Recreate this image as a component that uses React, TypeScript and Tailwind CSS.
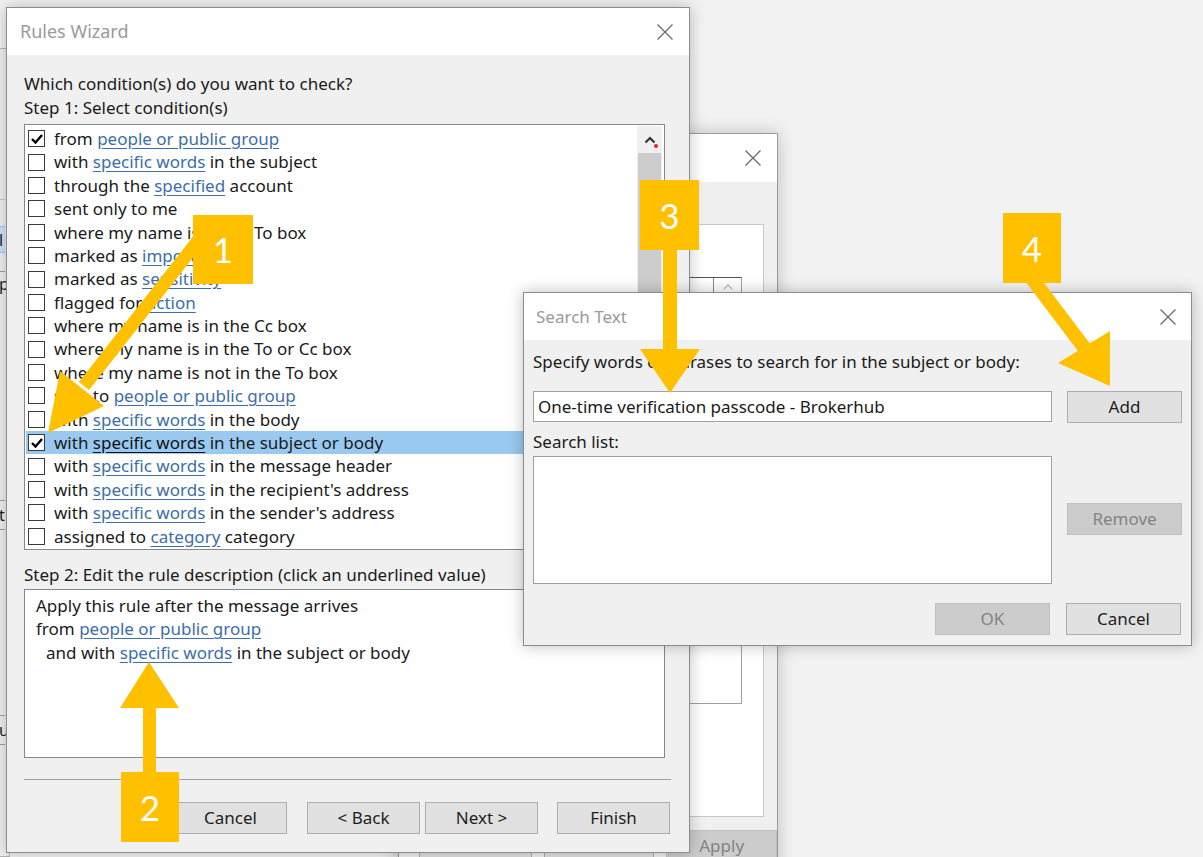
import React from 'react';

const font = "font-['Noto_Sans',sans-serif]";
const link = 'text-[#3c6ea8] underline underline-offset-[3px]';

type Cond = [string, string, string, boolean?];

const conditions: Cond[] = [
  ['from ', 'people or public group', '', true],
  ['with ', 'specific words', ' in the subject'],
  ['through the ', 'specified', ' account'],
  ['sent only to me', '', ''],
  ['where my name is in the To box', '', ''],
  ['marked as ', 'importance', ''],
  ['marked as ', 'sensitivity', ''],
  ['flagged for ', 'action', ''],
  ['where my name is in the Cc box', '', ''],
  ['where my name is in the To or Cc box', '', ''],
  ['where my name is not in the To box', '', ''],
  ['sent to ', 'people or public group', ''],
  ['with ', 'specific words', ' in the body'],
  ['with ', 'specific words', ' in the subject or body', true],
  ['with ', 'specific words', ' in the message header'],
  ['with ', 'specific words', " in the recipient's address"],
  ['with ', 'specific words', " in the sender's address"],
  ['assigned to ', 'category', ' category'],
];

const SELECTED = 13;

function CloseX() {
  return (
    <svg width="18" height="18" viewBox="0 0 18 18">
      <path d="M1.5 1.5 L16.5 16.5 M16.5 1.5 L1.5 16.5" stroke="#6b6b6b" strokeWidth="1.3" />
    </svg>
  );
}

function Check({ on }: { on?: boolean }) {
  return (
    <span className="w-[17px] h-[17px] border border-[#3a3a3a] bg-white flex items-center justify-center shrink-0">
      {on && (
        <svg width="14" height="14" viewBox="0 0 14 14">
          <path d="M2 7 L5.5 10.5 L12 3" stroke="#000" strokeWidth="2.4" fill="none" />
        </svg>
      )}
    </span>
  );
}

function Btn({ label, disabled, w = 'w-[113px]' }: { label: string; disabled?: boolean; w?: string }) {
  return (
    <div
      className={
        disabled
          ? `${w} h-[32px] flex items-center justify-center border border-[#bfbfbf] bg-[#cccccc] text-[#838383]`
          : `${w} h-[32px] flex items-center justify-center border border-[#adadad] bg-[#e1e1e1] text-[#1e1e1e]`
      }
    >
      {label}
    </div>
  );
}

function LeftBackWindow() {
  return (
    <div className="absolute left-[-300px] top-[48px] w-[310px] h-[809px] bg-[#f0f0f0] border border-[#b5b5b5] flex flex-col items-end pr-[4px] text-[16px] text-[#1e1e1e]">
      <div className="h-[150px]" />
      <div className="w-[40px] border-t border-[#c8c8c8] h-[27px]" />
      <div className="w-[40px] h-[27px] bg-[#cce4f7] border-y border-[#9ac6ed] flex items-center pl-[34px] leading-none">l</div>
      <div className="w-[40px] h-[18px]" />
      <div className="w-[40px] border-t border-[#a0a0a0] h-[24px] flex items-center pl-[34px]">p</div>
      <div className="h-[205px]" />
      <div className="w-[40px] border-y border-[#a0a0a0] h-[30px] flex items-center pl-[34px]">t</div>
      <div className="h-[185px]" />
      <div className="w-[40px] border-y border-[#a0a0a0] h-[30px] flex items-center pl-[34px]">u</div>
    </div>
  );
}

function MiddleBackWindow() {
  return (
    <div className="absolute left-[398px] top-[133px] w-[380px] h-[740px] bg-[#f0f0f0] border border-[#9a9a9a] shadow-[0_0_16px_rgba(0,0,0,0.22)] flex flex-col">
      <div className="h-[48px] bg-white flex items-center justify-end pr-[15px] shrink-0">
        <CloseX />
      </div>
      <div className="flex flex-col pl-[20px] pt-[42px]">
        <div className="w-[345px] h-[593px] bg-white border border-[#c8c8c8] flex flex-col pt-[52px]">
          <div className="w-[322px] h-[427px] border border-[#a0a0a0] border-t-[#555] flex flex-col">
            <div className="flex justify-end h-[20px] border-b border-[#e0e0e0]">
              <div className="w-[28px] border-l border-[#888]" />
              <div className="w-[28px] border-l border-[#888] flex items-start justify-center pt-[6px]">
                <svg width="10" height="6" viewBox="0 0 10 6">
                  <path d="M1 5 L5 1 L9 5" stroke="#bbb" strokeWidth="1.3" fill="none" />
                </svg>
              </div>
            </div>
          </div>
        </div>
        <div className="flex gap-[12px] mt-[13px] text-[17px]">
          <Btn label="OK" w="w-[115px]" />
          <Btn label="Cancel" w="w-[113px]" />
          <Btn label="Apply" disabled w="w-[113px]" />
        </div>
      </div>
    </div>
  );
}

function RulesWizard() {
  return (
    <div className="absolute left-[6px] top-[7px] w-[684px] h-[846px] bg-[#f0f0f0] border border-[#8c8c8c] shadow-[0_0_14px_rgba(0,0,0,0.25)] flex flex-col">
      <div className="h-[47px] bg-white flex items-center justify-between pl-[13px] pr-[15px] shrink-0">
        <span className="text-[18px] text-[#9a9a9a]">Rules Wizard</span>
        <CloseX />
      </div>
      <div className="flex flex-col pl-[17px] pr-[24px] pt-[17px] text-[17px] text-[#1a1a1a]">
        <div className="leading-[24px]">Which condition(s) do you want to check?</div>
        <div className="leading-[24px]">Step 1: Select condition(s)</div>
        <div className="mt-[4px] h-[426px] bg-white border border-[#828790] flex overflow-hidden">
          <div className="flex-1 flex flex-col pt-[2px] pl-[1px]">
            {conditions.map((c, i) => {
              const sel = i === SELECTED;
              return (
                <div
                  key={i}
                  className={
                    sel
                      ? 'h-[23.4px] flex items-center gap-[9px] pl-[2px] bg-[#99c9ef] whitespace-pre'
                      : 'h-[23.4px] flex items-center gap-[9px] pl-[2px] whitespace-pre'
                  }
                >
                  <Check on={c[3]} />
                  <span>
                    {c[0]}
                    {c[1] && (
                      <span className={sel ? 'underline underline-offset-[3px] text-[#111]' : link}>{c[1]}</span>
                    )}
                    {c[2]}
                  </span>
                </div>
              );
            })}
          </div>
          <div className="w-[25px] mr-[2px] mt-[1px] flex flex-col bg-[#f0f0f0]">
            <div className="h-[27px] flex items-center justify-center relative">
              <svg width="12" height="8" viewBox="0 0 12 8">
                <path d="M1.5 6.5 L6 2 L10.5 6.5" stroke="#333" strokeWidth="2.2" fill="none" />
              </svg>
              <span className="absolute left-[17px] top-[18px] w-[4px] h-[4px] rounded-full bg-[#e0202a]" />
            </div>
            <div className="mx-[1px] h-[220px] bg-[#cdcdcd]" />
          </div>
        </div>
        <div className="mt-[13px] leading-[24px]">Step 2: Edit the rule description (click an underlined value)</div>
        <div className="mt-[2px] h-[169px] bg-white border border-[#828790] pl-[11px] pt-[4px] flex flex-col whitespace-pre">
          <div className="leading-[23.4px]">Apply this rule after the message arrives</div>
          <div className="leading-[23.4px]">
            from <span className={link}>people or public group</span>
          </div>
          <div className="leading-[23.4px] pl-[10px]">
            {'and with '}
            <span className={link}>specific words</span> in the subject or body
          </div>
        </div>
        <div className="mt-[21px] h-[1px] bg-[#a0a0a0] -mr-[6px]" />
        <div className="mt-[22px] flex justify-end -mr-[5px]">
          <Btn label="Cancel" />
          <div className="w-[20px]" />
          <Btn label="< Back" />
          <div className="w-[5px]" />
          <Btn label="Next >" />
          <div className="w-[19px]" />
          <Btn label="Finish" />
        </div>
      </div>
    </div>
  );
}

function SearchText() {
  return (
    <div className="absolute left-[523px] top-[292px] w-[669px] h-[354px] bg-[#f0f0f0] border border-[#8c8c8c] shadow-[0_0_14px_rgba(0,0,0,0.25)] flex flex-col">
      <div className="h-[47px] bg-white flex items-center justify-between pl-[12px] pr-[14px] shrink-0">
        <span className="text-[17px] text-[#9a9a9a]">Search Text</span>
        <CloseX />
      </div>
      <div className="flex flex-col pl-[9px] pt-[10px] text-[17px] text-[#1a1a1a]">
        <div className="leading-[24px]">Specify words or phrases to search for in the subject or body:</div>
        <div className="mt-[17px] flex items-start gap-[15px]">
          <div className="w-[519px] h-[31px] bg-white border border-[#a0a0a0] flex items-center pl-[4px]">
            One-time verification passcode - Brokerhub
          </div>
          <Btn label="Add" w="w-[115px]" />
        </div>
        <div className="mt-[7px] leading-[24px]">Search list:</div>
        <div className="mt-[2px] flex items-start gap-[15px]">
          <div className="w-[519px] h-[128px] bg-white border border-[#a0a0a0]" />
          <div className="mt-[47px]">
            <Btn label="Remove" disabled w="w-[115px]" />
          </div>
        </div>
        <div className="mt-[19px] flex justify-end gap-[16px] pr-[10px]">
          <Btn label="OK" disabled w="w-[115px]" />
          <Btn label="Cancel" w="w-[115px]" />
        </div>
      </div>
    </div>
  );
}

function Badge({ n, className }: { n: string; className: string }) {
  return (
    <div
      className={`absolute bg-[#ffc000] text-white flex items-center justify-center text-[35px] font-['Lato',sans-serif] ${className}`}
    >
      {n}
    </div>
  );
}

function Annotations() {
  const y = '#ffc000';
  return (
    <>
      <svg className="absolute inset-0 pointer-events-none" width="1203" height="857" viewBox="0 0 1203 857">
        {/* 1 */}
        <line x1="208" y1="228" x2="84" y2="386" stroke={y} strokeWidth="13" />
        <polygon points="48,433 104,406 60,371" fill={y} />
        {/* 2 */}
        <rect x="143" y="704" width="13" height="70" fill={y} />
        <polygon points="120,708 179,708 149,662" fill={y} />
        {/* 3 */}
        <rect x="663" y="248" width="14" height="104" fill={y} />
        <polygon points="640,349 700,349 670,393" fill={y} />
        {/* 4 */}
        <line x1="1030" y1="276" x2="1086" y2="350" stroke={y} strokeWidth="14" />
        <polygon points="1058,363 1110,331 1110,386" fill={y} />
      </svg>
      <Badge n="1" className="left-[193px] top-[215px] w-[60px] h-[69px]" />
      <Badge n="2" className="left-[121px] top-[772px] w-[58px] h-[70px]" />
      <Badge n="3" className="left-[640px] top-[180px] w-[59px] h-[70px]" />
      <Badge n="4" className="left-[1003px] top-[213px] w-[58px] h-[70px]" />
    </>
  );
}

export default function App() {
  return (
    <div className={`relative w-[1203px] h-[857px] overflow-hidden bg-[#f2f2f2] ${font}`}>
      <LeftBackWindow />
      <MiddleBackWindow />
      <RulesWizard />
      <SearchText />
      <Annotations />
    </div>
  );
}
